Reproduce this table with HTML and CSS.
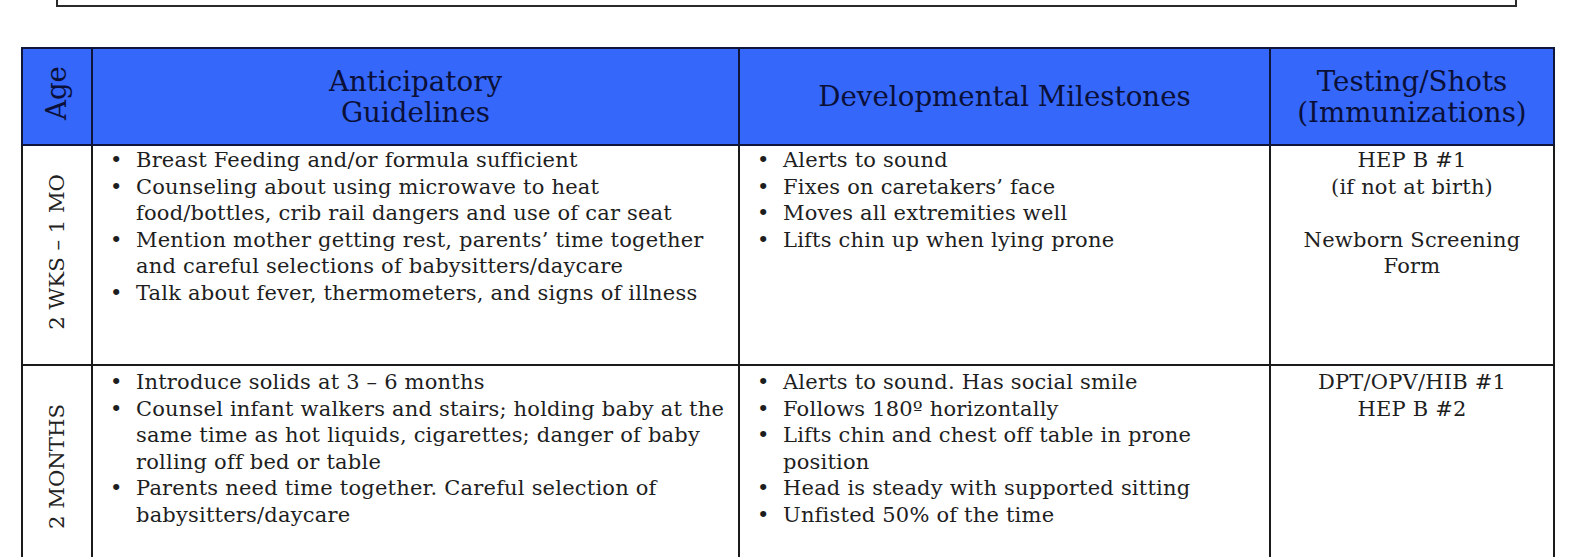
FILE: index.html
```html
<!DOCTYPE html>
<html lang="en">
<head>
<meta charset="utf-8">
<title>Well Baby Guidelines</title>
<link rel="stylesheet" href="styles.css">
</head>
<body>
<div class="page">
  <div class="top-box"></div>
  <table class="chart">
    <colgroup>
      <col class="c-age">
      <col class="c-ant">
      <col class="c-dev">
      <col class="c-test">
    </colgroup>
    <thead>
      <tr>
        <th class="age-cell"><span class="vert">Age</span></th>
        <th>Anticipatory<br>Guidelines</th>
        <th>Developmental Milestones</th>
        <th>Testing/Shots<br>(Immunizations)</th>
      </tr>
    </thead>
    <tbody>
      <tr class="row-1">
        <td class="age-cell"><span class="vert">2 WKS – 1 MO</span></td>
        <td>
          <ul class="bullets">
            <li>Breast Feeding and/or formula sufficient</li>
            <li>Counseling about using microwave to heat<br>food/bottles, crib rail dangers and use of car seat</li>
            <li>Mention mother getting rest, parents’ time together<br>and careful selections of babysitters/daycare</li>
            <li>Talk about fever, thermometers, and signs of illness</li>
          </ul>
        </td>
        <td>
          <ul class="bullets">
            <li>Alerts to sound</li>
            <li>Fixes on caretakers’ face</li>
            <li>Moves all extremities well</li>
            <li>Lifts chin up when lying prone</li>
          </ul>
        </td>
        <td class="tests">HEP B #1<br>(if not at birth)<br><br>Newborn Screening<br>Form</td>
      </tr>
      <tr class="row-2">
        <td class="age-cell"><span class="vert">2 MONTHS</span></td>
        <td>
          <ul class="bullets">
            <li>Introduce solids at 3 – 6 months</li>
            <li>Counsel infant walkers and stairs; holding baby at the<br>same time as hot liquids, cigarettes; danger of baby<br>rolling off bed or table</li>
            <li>Parents need time together. Careful selection of<br>babysitters/daycare</li>
          </ul>
        </td>
        <td>
          <ul class="bullets">
            <li>Alerts to sound. Has social smile</li>
            <li>Follows 180º horizontally</li>
            <li>Lifts chin and chest off table in prone<br>position</li>
            <li>Head is steady with supported sitting</li>
            <li>Unfisted 50% of the time</li>
          </ul>
        </td>
        <td class="tests">DPT/OPV/HIB #1<br>HEP B #2</td>
      </tr>
    </tbody>
  </table>
</div>
</body>
</html>
```

FILE: styles.css
```css
html, body {
  margin: 0;
  padding: 0;
  background: #ffffff;
}

.page {
  padding: 0 0 0 21px;
  font-family: "DejaVu Serif", "Liberation Serif", serif;
  color: #1e1e1e;
}

.top-box {
  margin-left: 35px;
  width: 1457px;
  height: 5px;
  border: 2px solid #2a2a2a;
  border-top: 0;
}

.chart {
  margin-top: 40px;
  border-collapse: collapse;
  table-layout: fixed;
  width: 1532px;
  border: 2px solid #1a1a1a;
}

.c-age { width: 70px; }
.c-ant { width: 647px; }
.c-dev { width: 531px; }
.c-test { width: 284px; }

.chart th {
  background: #3567fb;
  color: #0a1038;
  font-weight: normal;
  font-size: 27.7px;
  line-height: 31px;
  height: 95px;
  padding: 0;
  text-align: center;
  vertical-align: middle;
  border: 2px solid #10163a;
}

.chart td {
  border: 2px solid #1a1a1a;
  padding: 0;
  vertical-align: top;
  font-size: 21px;
  letter-spacing: 0.2px;
  line-height: 26.5px;
}

.row-1 td { height: 217px; }
.row-2 td { height: 205px; }

.chart td.age-cell {
  vertical-align: middle;
  text-align: center;
  font-size: 21.2px;
  letter-spacing: 0;
  color: #222222;
}

.vert {
  display: inline-block;
  writing-mode: vertical-rl;
  transform: rotate(180deg);
  white-space: nowrap;
  line-height: 1;
}

.bullets {
  list-style: none;
  margin: 1px 0 0 0;
  padding: 0;
}

.row-2 .bullets {
  margin-top: 3px;
}

.bullets li {
  padding-left: 43px;
  white-space: nowrap;
}

.bullets li::before {
  content: "•";
  display: inline-block;
  width: 43px;
  margin-left: -43px;
  padding-left: 17px;
  box-sizing: border-box;
  letter-spacing: 0;
}

.tests {
  text-align: center;
  padding-top: 1px !important;
}

.row-2 .tests {
  padding-top: 3px !important;
}
```
